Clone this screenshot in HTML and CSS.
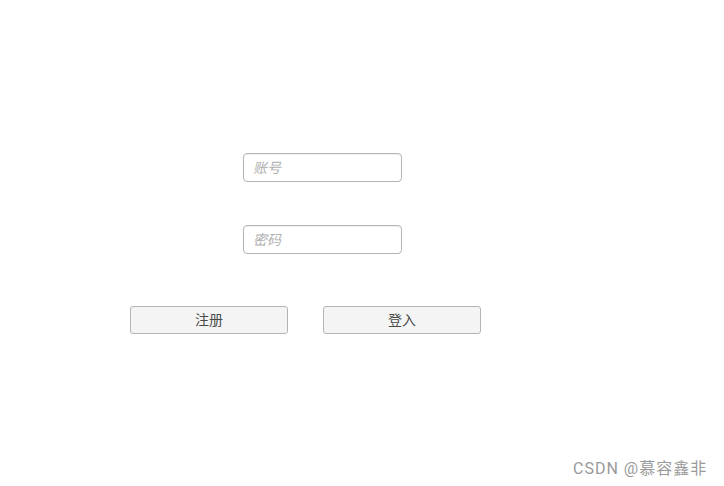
FILE: index.html
```html
<!DOCTYPE html>
<html>
<head>
<meta charset="utf-8">
<link rel="stylesheet" href="styles.css">
</head>
<body>
<div class="page">
  <div class="fields">
    <input class="field" type="text" placeholder="账号">
    <input class="field" type="password" placeholder="密码">
  </div>
  <div class="actions">
    <button class="btn">注册</button>
    <button class="btn">登入</button>
  </div>
</div>
<div class="watermark">CSDN @慕容鑫非</div>
</body>
</html>
```
FILE: styles.css
```css
html, body {
  margin: 0;
  padding: 0;
  background: #ffffff;
  font-family: "Noto Sans", "Noto Sans CJK SC", sans-serif;
}
.page {
  padding-top: 153px;
  display: flex;
  flex-direction: column;
}
.fields {
  display: flex;
  flex-direction: column;
  gap: 43px;
  padding-left: 243px;
}
.field {
  box-sizing: border-box;
  width: 159px;
  height: 29px;
  border: 1px solid #b4b4b4;
  border-radius: 4px;
  padding: 0 9px 2px;
  font-size: 14px;
  font-family: "Noto Sans CJK SC", sans-serif;
  color: #333;
  outline: none;
  box-shadow: inset 0 1px 1px rgba(0,0,0,0.06);
}
.field::placeholder {
  color: #b0b0b0;
  font-style: italic;
}
.actions {
  display: flex;
  gap: 35px;
  padding-left: 130px;
  margin-top: 52px;
}
.btn {
  box-sizing: border-box;
  width: 158px;
  height: 28px;
  background: #f4f4f4;
  border: 1px solid #b4b4b4;
  border-radius: 3px;
  font-size: 14px;
  font-family: "Noto Sans CJK SC", sans-serif;
  color: #4a4a4a;
  padding: 0 0 3px;
}
.watermark {
  position: absolute;
  left: 573px;
  top: 455px;
  font-size: 16px;
  letter-spacing: 1px;
  color: #9a9a9a;
  font-family: Roboto, "Noto Sans CJK SC", sans-serif;
  white-space: nowrap;
}
```
